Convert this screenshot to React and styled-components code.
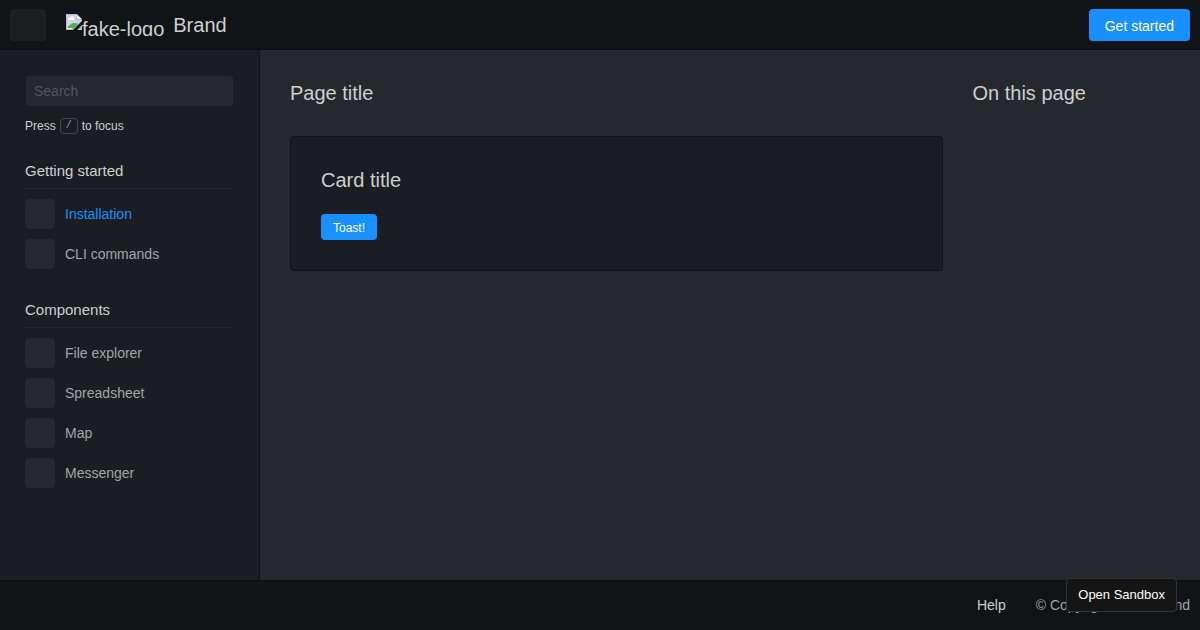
import { useState, useEffect, useRef } from "react"
import styled, { createGlobalStyle } from "styled-components"

const GlobalStyle = createGlobalStyle`
    * {
        box-sizing: border-box;
    }

    body {
        margin: 0;
        background-color: #25282c;
        color: #cfcfcf;
        font-family: "Liberation Sans", Arial, sans-serif;
        font-size: 14px;
        line-height: 20px;
    }
`

const Page = styled.div`
    min-height: 100vh;
    display: flex;
    flex-direction: column;
`

const Navbar = styled.header`
    height: 50px;
    padding: 0 10px;
    background-color: #111417;
    box-shadow: inset 0 -1px #0c0e10;
    display: flex;
    align-items: center;
    justify-content: space-between;
`

const NavbarStart = styled.div`
    display: flex;
    align-items: center;
    gap: 20px;
`

const MenuButton = styled.button`
    width: 36px;
    height: 32px;
    background-color: #1c1f22;
    border: none;
    border-radius: 4px;
`

const BrandLink = styled.a`
    display: flex;
    align-items: center;
    gap: 9px;
    color: #cfcfcf;
    font-size: 20px;
    line-height: 30px;
    text-decoration: none;
`

const Logo = styled.span`
    height: 22px;
    display: flex;
    overflow: hidden;
`

const Button = styled.button`
    height: ${props => props.$small ? "26px" : "32px"};
    padding: 2px ${props => props.$small ? "12px" : "16px"} 0;
    color: #ffffff;
    background-color: #1890ff;
    border: none;
    border-radius: 4px;
    font-family: inherit;
    font-size: ${props => props.$small ? "12px" : "14px"};
`

const Body = styled.div`
    flex: 1;
    display: flex;
`

const Sidebar = styled.nav`
    width: 260px;
    padding: 25px;
    background-color: #1a1d21;
    border-right: 1px solid #111417;
`

const SearchInput = styled.input`
    width: 100%;
    height: 32px;
    padding: 0 8px;
    color: #cfcfcf;
    background-color: #25282c;
    background-clip: padding-box;
    border: 1px solid transparent;
    border-radius: 4px;
    font-family: inherit;
    font-size: 14px;

    &::placeholder {
        color: #54565a;
    }
`

const Hint = styled.div`
    margin-top: 9px;
    display: flex;
    align-items: center;
    gap: 4px;
    font-size: 12px;
`

const Key = styled.kbd`
    width: 18px;
    color: #9a9c9e;
    border: 1px solid #44484d;
    border-radius: 4px;
    font-family: "Liberation Mono", monospace;
    font-size: 10px;
    line-height: 14px;
    text-align: center;
`

const SectionTitle = styled.h5`
    margin: 24px 0 10px;
    padding-bottom: 6px;
    border-bottom: 1px solid #25282c;
    font-size: 15px;
    font-weight: 400;
    line-height: 22px;
`

const LinkList = styled.ul`
    margin: 0 0 30px;
    padding: 0;
    list-style: none;
    display: flex;
    flex-direction: column;
    gap: 10px;
`

const SidebarLink = styled.a`
    height: 30px;
    display: flex;
    align-items: center;
    gap: 10px;
    color: ${props => props.$active ? "#1890ff" : "#a3a5a6"};
    text-decoration: none;
`

const LinkIcon = styled.span`
    width: 30px;
    height: 30px;
    background-color: #25282c;
    border-radius: 4px;
`

const Content = styled.main`
    flex: 1;
    padding: 28px 0 28px 30px;
    display: grid;
    grid-template-columns: 3fr 1fr;
    align-items: start;
`

const Column = styled.div`
    padding-right: 30px;
`

const Title = styled.h2`
    margin: 0;
    font-size: 20px;
    font-weight: 400;
    line-height: 30px;
`

const Card = styled.section`
    margin-top: 28px;
    padding: 28px 30px 30px;
    background-color: #1a1d21;
    border: 1px solid #111417;
    border-radius: 4px;

    ${Button} {
        display: block;
        margin-top: 19px;
    }
`

const Footer = styled.footer`
    height: 50px;
    padding: 0 10px;
    color: #a3a5a6;
    background-color: #111417;
    box-shadow: inset 0 1px #0c0e10;
    display: flex;
    align-items: center;
    justify-content: flex-end;
    gap: 30px;
`

const FooterLink = styled.a`
    color: #cfcfcf;
    text-decoration: none;
`

const SandboxButton = styled.button`
    position: fixed;
    right: 23px;
    bottom: 18px;
    height: 34px;
    padding: 0 11px 2px;
    color: #ffffff;
    background-color: #151515;
    border: 1px solid #343434;
    border-radius: 4px;
    font-family: inherit;
    font-size: 13px;
`

const gettingStarted = ["Installation", "CLI commands"]
const components = ["File explorer", "Spreadsheet", "Map", "Messenger"]

function BrokenImage() {
    return (
        <svg width="16" height="16" viewBox="0 0 16 16" aria-hidden="true">
            <path d="M0 0h11l5 5v2l-9 9H0z" fill="#b9bbbd" />
            <path d="M1 1h9v5h5v1l-8 8H1z" fill="#c9d3fb" />
            <path d="M11 1l4 4h-4z" fill="#eef1fb" />
            <path d="M2 6a2 2 0 0 1 2-2 2 2 0 0 1 4 1v1z" fill="#ffffff" />
            <path d="M1 14c2-2 4-5 7-5 2 0 3 0 4 1l-5 5H1z" fill="#56ad3c" />
            <path d="M1 14h6l-1 1H1z" fill="#eef1fb" />
            <path d="M16 11v5h-5z" fill="#b9bbbd" />
        </svg>
    )
}

function Section({ title, items, active, onSelect }) {
    return (
        <>
            <SectionTitle>{title}</SectionTitle>
            <LinkList>
                {
                    items.map(item => {
                        return (
                            <li key={item}>
                                <SidebarLink href="#" $active={item === active} onClick={() => onSelect(item)}>
                                    <LinkIcon />
                                    {item}
                                </SidebarLink>
                            </li>
                        )
                    })
                }
            </LinkList>
        </>
    )
}

export default function App() {

    const [active, setActive] = useState("Installation")
    const searchRef = useRef(null)

    useEffect(() => {
        const handleKeyDown = (e) => {
            if (e.key === "/" && document.activeElement !== searchRef.current) {
                e.preventDefault()
                searchRef.current.focus()
            }
        }
        window.addEventListener("keydown", handleKeyDown)
        return () => window.removeEventListener("keydown", handleKeyDown)
    }, [])

    return (
        <Page>
            <GlobalStyle />
            <Navbar>
                <NavbarStart>
                    <MenuButton aria-label="Toggle sidebar" />
                    <BrandLink href="#">
                        <Logo><BrokenImage />fake-logo</Logo>
                        Brand
                    </BrandLink>
                </NavbarStart>
                <Button>Get started</Button>
            </Navbar>
            <Body>
                <Sidebar>
                    <SearchInput ref={searchRef} type="text" placeholder="Search" aria-label="Search" />
                    <Hint>Press <Key>/</Key> to focus</Hint>
                    <Section title="Getting started" items={gettingStarted} active={active} onSelect={setActive} />
                    <Section title="Components" items={components} active={active} onSelect={setActive} />
                </Sidebar>
                <Content>
                    <Column>
                        <Title>Page title</Title>
                        <Card>
                            <Title>Card title</Title>
                            <Button $small>Toast!</Button>
                        </Card>
                    </Column>
                    <Column>
                        <Title>On this page</Title>
                    </Column>
                </Content>
            </Body>
            <Footer>
                <FooterLink href="#">Help</FooterLink>
                <span>© Copyright 2021, Brand</span>
            </Footer>
            <SandboxButton>Open Sandbox</SandboxButton>
        </Page>
    )
}
